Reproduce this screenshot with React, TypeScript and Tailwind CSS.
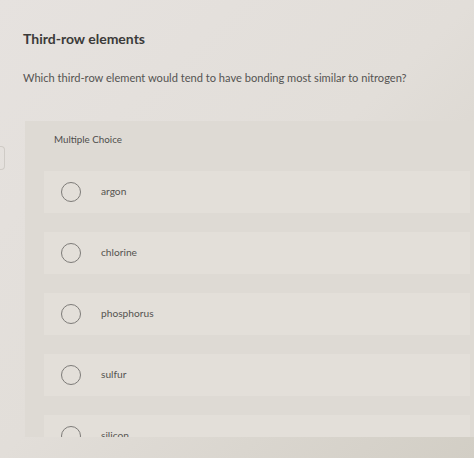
const choices = ["argon", "chlorine", "phosphorus", "sulfur", "silicon"];

function Choice({ label }: { label: string }) {
  return (
    <div className="flex h-[42px] items-center bg-[#e3dfd9]">
      <span className="ml-[17px] h-[20px] w-[20px] rounded-full border-[1.5px] border-[#7d7b78]" />
      <span className="ml-[20px] text-[10.2px] text-[#555350]">{label}</span>
    </div>
  );
}

export default function App() {
  return (
    <div
      className="relative h-[458px] w-[474px] overflow-hidden bg-gradient-to-br from-[#e6e2df] via-[#e2ded9] to-[#d2cec5] pt-[30px]"
      style={{ fontFamily: "Lato, 'Open Sans', sans-serif" }}
    >
      <div className="absolute left-0 top-[146px] h-[24px] w-[5px] rounded-r-sm border border-l-0 border-[#cfcbc6]" />
      <h1 className="pl-[23px] text-[14px] font-bold leading-[18px] text-[#3b3a39]">
        Third-row elements
      </h1>
      <p className="mt-[22px] pl-[23px] text-[11.1px] leading-[16px] text-[#555452]">
        Which third-row element would tend to have bonding most similar to nitrogen?
      </p>
      <div className="ml-[25px] mt-[35px] h-[316px] overflow-hidden bg-[#dedad4] pl-[19px] pr-[4px] pt-[11px]">
        <div className="pl-[10px] text-[9.8px] leading-[14px] text-[#4f4e4c]">Multiple Choice</div>
        <div className="mt-[25px] flex flex-col gap-[19px]">
          {choices.map((c) => (
            <Choice key={c} label={c} />
          ))}
        </div>
      </div>
    </div>
  );
}
